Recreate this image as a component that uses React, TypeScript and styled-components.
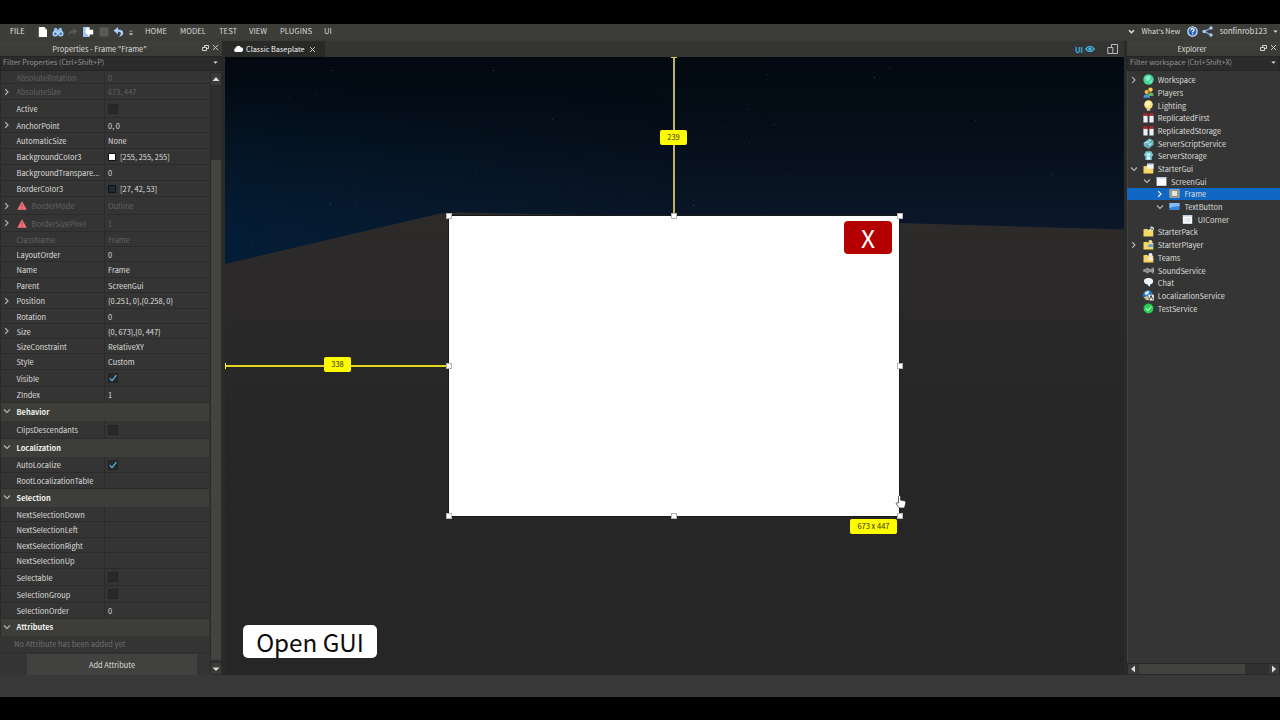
import React from 'react';
import styled, { createGlobalStyle } from 'styled-components';

const GlobalStyle = createGlobalStyle`
  * { box-sizing: border-box; }
  html, body { margin: 0; background: #000; overflow: hidden; }
  body { font-family: "Noto Sans CJK SC", "Open Sans", sans-serif; font-size: 7.45px; color: #dededa; }
`;

const Screen = styled.div`
  width: 1280px;
  height: 720px;
  padding: 24px 0 23px;
  background: #000;
  display: flex;
  flex-direction: column;
`;
const MenuBar = styled.header`
  height: 17px;
  flex: none;
  display: flex;
  align-items: center;
  background: linear-gradient(#3c3d38, #3d3e3a 80%, #393a37);
  line-height: 14px;
  padding-bottom: 3px;
  font-size: 7.7px;
`;
const FileMenu = styled.div`
  width: 38px;
  padding-left: 10px;
  color: #e2e2de;
  font-size: 7.4px;
`;
const QuickTools = styled.div`
  display: flex;
  align-items: center;
  width: 107px;
  height: 14px;
  padding-top: 1px;
  svg { flex: none; margin-right: 3.7px; }
`;
const MenuItem = styled.div<{ $w: number }>`
  width: ${p => p.$w}px;
  color: #d6d6d8;
  white-space: nowrap;
`;
const Account = styled.div`
  margin-left: auto;
  display: flex;
  align-items: center;
  padding-right: 2px;
  white-space: nowrap;
  svg { flex: none; }
`;
const NewsLabel = styled.span`
  font-size: 7.1px;
`;
const Gap = styled.span<{ $w: number }>`
  width: ${p => p.$w}px;
  flex: none;
`;
const Workbench = styled.main`
  height: 634px;
  flex: none;
  display: flex;
  background: #353535;
`;
const PropertiesPanel = styled.aside`
  width: 225px;
  flex: none;
  display: flex;
  flex-direction: column;
  background: #343434;
  border-right: 3px solid #2a2b29;
  box-shadow: inset -1px 0 #464741;
`;
const PanelTitle = styled.div`
  height: 15px;
  flex: none;
  display: flex;
  align-items: center;
  justify-content: center;
  background: linear-gradient(#3e3f3a, #3a3b36);
  line-height: 14px;
  padding-right: 23px;
  position: relative;
`;
const TitleButtons = styled.span<{ $right: number }>`
  position: absolute;
  right: ${p => p.$right}px;
  top: 3px;
  display: flex;
  gap: 3px;
`;
const Filter = styled.div`
  height: 15px;
  flex: none;
  display: flex;
  align-items: center;
  justify-content: space-between;
  padding: 0 3px 2px 2px;
  background: #2b2b2b;
  border: 1px solid #242424;
  color: #929292;
  font-size: 7.25px;
  line-height: 11px;
  white-space: nowrap;
`;
const PropertiesBody = styled.div`
  display: flex;
  height: 604px;
  flex: none;
  padding-top: 1px;
`;
const PropertyList = styled.div`
  width: 209px;
  height: 603px;
  flex: none;
`;
const PropertyRow = styled.div<{ $h: number }>`
  height: ${p => p.$h}px;
  display: flex;
  align-items: center;
  border-bottom: 1px solid #2b2b2b;
  border-left: 1px solid #2a2a2a;
  overflow: hidden;
`;
const SectionRow = styled.div<{ $h: number }>`
  height: ${p => p.$h}px;
  display: flex;
  align-items: center;
  padding-bottom: 2px;
  background: #3d3e39;
  border-left: 1px solid #2a2a2a;
  color: #f0f0ec;
  font-weight: 700;
`;
const Arrow = styled.span<{ $w: number; $pad?: number }>`
  width: ${p => p.$w}px;
  flex: none;
  display: flex;
  align-items: center;
  padding-left: ${p => p.$pad ?? 2.4}px;
`;
const PropertyName = styled.span<{ $dim?: boolean }>`
  width: 88.5px;
  flex: none;
  height: 100%;
  display: flex;
  align-items: center;
  gap: 5px;
  border-right: 1px solid #2b2b2b;
  color: ${p => (p.$dim ? '#61625e' : '#dededa')};
  white-space: nowrap;
`;
const PropertyValue = styled.span<{ $dim?: boolean }>`
  padding-left: 3px;
  display: flex;
  align-items: center;
  gap: 4px;
  color: ${p => (p.$dim ? '#61625e' : '#dededa')};
  white-space: nowrap;
`;
const CheckBox = styled.span`
  width: 10px;
  height: 10px;
  background: #292929;
  border: 1px solid #232323;
  display: flex;
  svg { display: block; }
`;
const Swatch = styled.span<{ $color: string }>`
  width: 8px;
  height: 8px;
  background: ${p => p.$color};
  border: 1px solid #111;
`;
const EmptyNote = styled.div`
  height: 17px;
  padding-left: 14px;
  line-height: 16px;
  color: #70706e;
  border-bottom: 1px solid #2d2d2d;
`;
const AddButton = styled.div`
  margin: 1px 12px 0 27px;
  height: 21px;
  background: #414140;
  line-height: 21px;
  text-align: center;
`;
const VerticalScroll = styled.div`
  width: 12px;
  margin-left: 1px;
  height: 603px;
  display: flex;
  flex-direction: column;
  background: #2e2e2e;
  border: 1px solid #292929;
`;
const ScrollButton = styled.span<{ $w: number; $h: number }>`
  width: ${p => p.$w}px;
  height: ${p => p.$h}px;
  flex: none;
  display: flex;
  align-items: center;
  justify-content: center;
  background: #3a3b38;
`;
const VerticalThumb = styled.div`
  margin: 75px 0 3px;
  flex: 1;
  background: #43443f;
`;
const Center = styled.section`
  width: 899px;
  flex: none;
  display: flex;
  flex-direction: column;
`;
const TabStrip = styled.div`
  height: 16px;
  flex: none;
  display: flex;
  align-items: center;
  justify-content: space-between;
  background: #343433;
`;
const DocumentTab = styled.div`
  width: 100px;
  height: 16px;
  display: flex;
  align-items: center;
  padding-left: 8px;
  background: #292a28;
  color: #f4f4f4;
  font-size: 7.3px;
  white-space: nowrap;
`;
const ViewTools = styled.div`
  display: flex;
  align-items: center;
  padding-right: 5px;
  color: #3fb4e2;
  font-weight: 700;
`;
const Viewport = styled.div`
  height: 618px;
  position: relative;
  overflow: hidden;
  background: #272727;
`;
const Scene = styled.svg`
  display: block;
`;
const GuiFrame = styled.div`
  position: absolute;
  left: 223px;
  top: 158px;
  width: 452px;
  height: 302px;
  background: #fefefe;
  border: 1px solid #17191c;
`;
const CloseGui = styled.div`
  position: absolute;
  right: 7px;
  top: 5px;
  width: 48px;
  height: 33px;
  border-radius: 4px;
  background: #b50000;
  color: #fff;
  font-size: 24.5px;
  line-height: 33px;
  text-align: center;
`;
const OpenGui = styled.div`
  position: absolute;
  left: 18px;
  top: 568px;
  width: 134px;
  height: 33px;
  border-radius: 5px;
  background: #fff;
  color: #0b0b0b;
  font-size: 24.2px;
  line-height: 33px;
  text-align: center;
  white-space: nowrap;
`;
const Measure = styled.div<{ $x: number; $y: number; $w: number; $h: number }>`
  position: absolute;
  left: ${p => p.$x}px;
  top: ${p => p.$y}px;
  width: ${p => p.$w}px;
  height: ${p => p.$h}px;
  background: #fffb00;
  border-radius: 2px;
  color: #353300;
  font-size: 7.5px;
  line-height: ${p => p.$h - 2}px;
  text-align: center;
`;
const Guide = styled.div<{ $x: number; $y: number; $w: number; $h: number; $c: string }>`
  position: absolute;
  left: ${p => p.$x}px;
  top: ${p => p.$y}px;
  width: ${p => p.$w}px;
  height: ${p => p.$h}px;
  background: ${p => p.$c};
`;
const Handle = styled.div<{ $x: number; $y: number }>`
  position: absolute;
  left: ${p => p.$x - 3}px;
  top: ${p => p.$y - 3}px;
  width: 6px;
  height: 6px;
  background: #fff;
  border: 1px solid #b5b5b5;
`;
const Pointer = styled.svg`
  position: absolute;
  left: 670px;
  top: 437px;
`;
const ExplorerPanel = styled.aside`
  width: 156px;
  flex: none;
  display: flex;
  flex-direction: column;
  background: #353535;
  border-left: 3px solid #2a2b29;
  box-shadow: inset 1px 0 #424340;
`;
const Tree = styled.div`
  flex: 1;
  padding-top: 2.4px;
`;
const TreeRow = styled.div<{ $level: number; $selected?: boolean }>`
  height: 12.7px;
  display: flex;
  align-items: center;
  padding-left: ${p => 2.5 + p.$level * 13.3}px;
  background: ${p => (p.$selected ? '#1068c4' : 'transparent')};
  color: #dededa;
  white-space: nowrap;
`;
const TreeIcon = styled.span`
  width: 11px;
  height: 11px;
  flex: none;
  margin: 0 4.3px 0 1px;
  svg { display: block; }
`;
const HorizontalScroll = styled.div`
  height: 12px;
  flex: none;
  display: flex;
  border: 1px solid #282828;
  background: #303030;
`;
const HorizontalThumb = styled.div`
  width: 106px;
  margin-left: 1px;
  background: #42433e;
`;
const StatusBar = styled.footer`
  height: 22px;
  flex: none;
  background: #383838;
`;

const Chevron = ({ open, color = '#b9bab5' }: { open?: boolean; color?: string }) => (
  <svg width="8" height="8" viewBox="0 0 8 8" fill="none" stroke={color} strokeWidth="1.1">
    <path d={open ? 'M1 2.5 4 5.5 7 2.5' : 'M2.2 1.2 5 4 2.2 6.8'} />
  </svg>
);
const Triangle = ({ d, size = 8 }: { d: string; size?: number }) => (
  <svg width={size} height={size} viewBox="0 0 8 8" fill="#dcdcd8"><path d={d} /></svg>
);
const DOWN = 'M.5 2.5h7L4 6Z';
const UP = 'M.5 6h7L4 2Z';

const CloseX = () => (
  <svg width="7" height="7" viewBox="0 0 7 7" stroke="#c8c8c4" strokeWidth="1"><path d="m1 1 5 5M6 1 1 6" /></svg>
);
const WindowButtons = ({ right }: { right: number }) => (
  <TitleButtons $right={right}>
    <svg width="7" height="8" viewBox="0 0 7 8" fill="none" stroke="#d2d2ce"><path d="M2.5 3V1.5h4v3H5M.5 3.5h4v3h-4z" /></svg>
    <CloseX />
  </TitleButtons>
);

type Prop = { n: string; v?: string; h: number; arrow?: boolean; dim?: boolean; warn?: boolean; check?: boolean; swatch?: string };
type Section = { title?: string; h?: number; rows: Prop[] };

const sections: Section[] = [
  { rows: [
    { n: 'AbsoluteRotation', v: '0', h: 12, dim: true },
    { n: 'AbsoluteSize', v: '673, 447', h: 16, dim: true, arrow: true },
    { n: 'Active', h: 18, check: false },
    { n: 'AnchorPoint', v: '0, 0', h: 15, arrow: true },
    { n: 'AutomaticSize', v: 'None', h: 16 },
    { n: 'BackgroundColor3', v: '[255, 255, 255]', h: 16, swatch: '#fff' },
    { n: 'BackgroundTranspare...', v: '0', h: 16 },
    { n: 'BorderColor3', v: '[27, 42, 53]', h: 16, swatch: '#1b2a35' },
    { n: 'BorderMode', v: 'Outline', h: 18, dim: true, arrow: true, warn: true },
    { n: 'BorderSizePixel', v: '1', h: 17, dim: true, arrow: true, warn: true },
    { n: 'ClassName', v: 'Frame', h: 15, dim: true },
    { n: 'LayoutOrder', v: '0', h: 15 },
    { n: 'Name', v: 'Frame', h: 16 },
    { n: 'Parent', v: 'ScreenGui', h: 15 },
    { n: 'Position', v: '{0.251, 0},{0.258, 0}', h: 16, arrow: true },
    { n: 'Rotation', v: '0', h: 15 },
    { n: 'Size', v: '{0, 673},{0, 447}', h: 15, arrow: true },
    { n: 'SizeConstraint', v: 'RelativeXY', h: 15 },
    { n: 'Style', v: 'Custom', h: 16 },
    { n: 'Visible', h: 17, check: true },
    { n: 'ZIndex', v: '1', h: 16 },
  ] },
  { title: 'Behavior', h: 18, rows: [{ n: 'ClipsDescendants', h: 18, check: false }] },
  { title: 'Localization', h: 18, rows: [
    { n: 'AutoLocalize', h: 16, check: true },
    { n: 'RootLocalizationTable', h: 16 },
  ] },
  { title: 'Selection', h: 18, rows: [
    { n: 'NextSelectionDown', h: 15 },
    { n: 'NextSelectionLeft', h: 16 },
    { n: 'NextSelectionRight', h: 15 },
    { n: 'NextSelectionUp', h: 16 },
    { n: 'Selectable', h: 17, check: false },
    { n: 'SelectionGroup', h: 17, check: false },
    { n: 'SelectionOrder', v: '0', h: 16 },
  ] },
  { title: 'Attributes', h: 17, rows: [] },
];

const Property = ({ p }: { p: Prop }) => (
  <PropertyRow $h={p.h}>
    <Arrow $w={15.5}>{p.arrow && <Chevron />}</Arrow>
    <PropertyName $dim={p.dim}>
      {p.warn && (
        <svg width="10" height="9" viewBox="0 0 10 9"><path d="M5 .3 9.8 8.7H.2Z" fill="#f2707a" /><path d="M5 3.2v2.6M5 6.7v1" stroke="#a8444d" /></svg>
      )}
      {p.n}
    </PropertyName>
    <PropertyValue $dim={p.dim}>
      {p.check !== undefined && (
        <CheckBox>
          {p.check && <svg width="8" height="8" viewBox="0 0 8 8" fill="none" stroke="#4fbdf0" strokeWidth="1.3"><path d="M.8 4.4 3 6.6 7.4 1.2" /></svg>}
        </CheckBox>
      )}
      {p.swatch && <Swatch $color={p.swatch} />}
      {p.v}
    </PropertyValue>
  </PropertyRow>
);

type Node = { n: string; icon: keyof typeof icons; level?: number; open?: boolean; selected?: boolean };

const Folder = () => <path d="M.5 3.2 4 2.8l1 .9h5.3v6.8H.5Z" fill="#f7d763" />;
const icons = {
  world: <><circle cx="5.5" cy="5.5" r="5.2" fill="#45d98c" /><path d="M2 3.5Q4.500.8 7.5 2.500L7 5.600 4 7.200ZM6 8l3-2 .3 1.500-2.200 1.900Z" fill="#86e7dd" /></>,
  players: <><circle cx="7.5" cy="2.6" r="2.2" fill="#ffd34f" /><path d="M5.2 9V6.8Q7.5 3.8 10.4 6.8V9Z" fill="#65b84f" /><circle cx="3.6" cy="5" r="2" fill="#ffbd55" /><path d="M.5 10.8Q.7 7.2 3.6 7.2T7 10.8Z" fill="#4796df" /></>,
  light: <><circle cx="5.5" cy="4.600" r="4.300" fill="#ffe27b" /><circle cx="4.800" cy="3.800" r="2.400" fill="#fff6ce" /><path d="M3.8 8.4h3.4v2.3H3.8Z" fill="#d9d2b0" /></>,
  replicated: <><path d="M.4 3.500h4.200v7H.4ZM6.400 3.500h4.200v7H6.400Z" fill="#e8f1fa" /><path d="M.4 1h4.200v2.800H.4ZM6.400 1h4.200v2.800H6.400Z" fill="#a8242c" /><path d="M4.600 3.800h1.800v1.200H4.600Z" fill="#b03840" /></>,
  server: <><path d="m6.5.3 4 2.500v4L7 9.600l-1 1.200L1 8.200.5 5Z" fill="#6fb9c5" /><path d="m1.500 5 3-1.200 2 1.200M5.500 7.200l3-1.500M6 2.500l2 1" stroke="#d3f5f6" fill="none" /><path d="m3.500 7 2 1.500M7 4.500l1.500-1" stroke="#2f7f90" fill="none" /></>,
  storage: <><path d="M.6 5.2 3 1.3h5.2l2.3 3.9-1.7 1V10H2.3V6.2Z" fill="#76c8d0" /><path d="M3.7 3.6h3.6v1.8H3.7ZM4 6.5h3v3H4Z" fill="#dffafb" /></>,
  startergui: <><Folder /><path d="M4 .7h6.6v5H4Z" fill="#f6f8fb" /><path d="M4 .7h6.6v1.200H4Z" fill="#b9cde8" /></>,
  screen: <><path d="M.6 1.2h9.8v8.6H.6Z" fill="#f9fbfd" /><path d="M.6 1.2h9.8v1.3H.6Z" fill="#b4cbe8" /></>,
  frame: <><path d="M.5 1.2h10v8.6H.5Z" fill="#7c8388" /><path d="M2.7 3h5.600v5H2.700Z" fill="#e3e6d6" /><path d="M1 1.700h9v7.600H1Z" stroke="#a9afa8" fill="none" /></>,
  button: <><path d="M.4 2h10.2v7H.4Z" fill="#3783df" /><path d="M.4 2h10.2v3L4 6 .4 7Z" fill="#83b9f5" /></>,
  corner: <><path d="M.8 1.2h9.4v8.6H.8Z" fill="#f9fafc" /><path d="M2.2 5h1M4.2 5h4M2.2 7.2h1M4.2 7.2h4" stroke="#b7c1d0" strokeWidth=".8" /><path d="M.8 1.2h9.4v1.3H.8Z" fill="#b8cbe6" /></>,
  pack: <><Folder /><path d="m5.500 5.500 3-3M7.500 1.500q3-1 2.800 2.300" stroke="#e0e4e8" strokeWidth="1.400" fill="none" /></>,
  player: <><Folder /><circle cx="7.4" cy="3" r="2" fill="#f8dc9b" /><path d="M4.7 8q.5-3 3-3t3 3Z" fill="#629edd" /></>,
  teams: <><Folder /><circle cx="7.5" cy="3" r="2" fill="#ececec" /><path d="M5 8q.3-3 2.700-3t2.800 3Z" fill="#eee" /></>,
  sound: <><path d="M.3 4h2l2.2-2v7L2.3 7h-2ZM6 4h2l2.2-2v7L8 7H6Z" fill="#8f9092" /><path d="M5.2 3v5M10.6 3.5v4" stroke="#c1c2c3" /></>,
  chat: <path d="M1 3.5Q1.3 1 5.5 1t4.7 3.2Q10 7 7.200 7.400L6.500 10 4.500 7.400Q.8 7 1 3.5Z" fill="#edf5fa" />,
  locale: <><circle cx="5" cy="5.2" r="5" fill="#2479c8" /><path d="M1.5 3Q4 .3 6.5 1.4L5 4.2 2.7 5Z" fill="#dceef7" /><path d="M5 4.700h5.800v5.800H6.600Z" fill="#f7ede0" /><path d="m6.500 9.500 1.600-4 1.600 4" stroke="#2a3948" fill="none" /><path d="M1 7.2 4.4 6l1.500 3.600-2 .8Z" fill="#edbf70" /></>,
  test: <><circle cx="5.5" cy="5.5" r="4.900" fill="#2acd55" /><path d="m3 5.500 2 2 3.300-3.800" stroke="#a9f5b8" strokeWidth="1.200" fill="none" /></>,
};

const nodes: Node[] = [
  { n: 'Workspace', icon: 'world', open: false },
  { n: 'Players', icon: 'players' },
  { n: 'Lighting', icon: 'light' },
  { n: 'ReplicatedFirst', icon: 'replicated' },
  { n: 'ReplicatedStorage', icon: 'replicated' },
  { n: 'ServerScriptService', icon: 'server' },
  { n: 'ServerStorage', icon: 'storage' },
  { n: 'StarterGui', icon: 'startergui', open: true },
  { n: 'ScreenGui', icon: 'screen', level: 1, open: true },
  { n: 'Frame', icon: 'frame', level: 2, open: false, selected: true },
  { n: 'TextButton', icon: 'button', level: 2, open: true },
  { n: 'UICorner', icon: 'corner', level: 3 },
  { n: 'StarterPack', icon: 'pack' },
  { n: 'StarterPlayer', icon: 'player', open: false },
  { n: 'Teams', icon: 'teams' },
  { n: 'SoundService', icon: 'sound' },
  { n: 'Chat', icon: 'chat' },
  { n: 'LocalizationService', icon: 'locale' },
  { n: 'TestService', icon: 'test' },
];

const stars = [[107, 13], [64, 40], [91, 36], [268, 13], [542, 17], [664, 11], [649, 20], [522, 52], [500, 70], [549, 67], [524, 86], [564, 118], [468, 148], [27, 185], [130, 147], [105, 146], [625, 129], [750, 63], [827, 117], [327, 62], [251, 114]];
const handles = [[224, 159], [449, 159], [674.5, 159], [224, 309], [674.5, 309], [224, 459], [449, 459], [674.5, 459]];
const menus: [string, number][] = [['HOME', 35], ['MODEL', 39], ['TEST', 30], ['VIEW', 31], ['PLUGINS', 44], ['UI', 20]];

export default function App() {
  return (
    <>
      <GlobalStyle />
      <Screen>
        <MenuBar>
          <FileMenu>FILE</FileMenu>
          <QuickTools>
            <svg width="10" height="12" viewBox="0 0 10 12"><path d="M.8 1h5.5L9 3.8V11H.8Z" fill="#fff" /><path d="M6.3 1v3H9" fill="#c7cbd2" /></svg>
            <svg width="12" height="12" viewBox="0 0 12 12"><path d="M2.500 2h2.200l.6 1.500h1.400L7.300 2h2.200l1.300 5H1.200Z" fill="#8fc0f0" /><circle cx="3.200" cy="7.700" r="2.100" fill="#477fb8" stroke="#b9dcff" strokeWidth="1.200" /><circle cx="8.800" cy="7.700" r="2.100" fill="#477fb8" stroke="#b9dcff" strokeWidth="1.200" /></svg>
            <svg width="11" height="12" viewBox="0 0 11 12"><path d="M1.300 10Q1 4.500 6.200 4.500V1.700L10.300 5.600 6.200 9V6.500Q3 6.500 1.300 10Z" fill="#5a5b59" /></svg>
            <svg width="12" height="12" viewBox="0 0 12 12"><path d="M1 1h6.500v10H1Z" fill="#9bc5f4" /><path d="M4.500 1.500h3v2.300h3.700v4.600H7.500v2.400L3 6Z" fill="#fff" /></svg>
            <svg width="12" height="12" viewBox="0 0 12 12"><path d="M1.500 1.500h9v9h-9Z" fill="#5a5b59" /></svg>
            <svg width="11" height="12" viewBox="0 0 11 12"><path d="M5 1 .5 4.700 5 8.200V5.700Q8 5.500 7.700 8.100 7.500 9.500 5.800 11 10.200 10 10.200 6.800 10 3.500 5 3.500Z" fill="#a9d0f8" /></svg>
            <svg width="6" height="8" viewBox="0 0 6 8"><path d="M1.500 3.200h3M1.500 5.700h3L3 7Z" stroke="#ccc" strokeWidth=".7" fill="#ccc" /></svg>
          </QuickTools>
          {menus.map(([label, w]) => <MenuItem key={label} $w={w}>{label}</MenuItem>)}
          <Account>
            <svg width="7" height="7" viewBox="0 0 7 7" fill="none" stroke="#e4e4e4" strokeWidth="1.4"><path d="m1 2.3 2.5 2.5L6 2.3" /></svg>
            <Gap $w={7} />
            <NewsLabel>What's New</NewsLabel>
            <Gap $w={6.5} />
            <svg width="11" height="11" viewBox="0 0 11 11" fill="none"><circle cx="5.5" cy="5.5" r="4.7" fill="#2b66b9" stroke="#dcecff" strokeWidth="1.1" /><path d="M3.900 4.300q.2-1.700 1.800-1.600 1.500.2 1.400 1.400-.1.800-1.500 1.600v.8M5.600 7.400v1.100" stroke="#fff" strokeWidth="1.200" /></svg>
            <Gap $w={4} />
            <svg width="11" height="11" viewBox="0 0 11 11"><path d="M9 2 2.300 5.500 9 9" stroke="#86b6ee" fill="none" strokeWidth="1.200" /><g fill="#a6cbf7"><circle cx="9" cy="2" r="1.7" /><circle cx="2.2" cy="5.5" r="1.8" /><circle cx="9" cy="9" r="1.7" /></g></svg>
            <Gap $w={7} />
            sonfinrob123
            <Gap $w={6} />
            <Triangle d={DOWN} size={5} />
          </Account>
        </MenuBar>
        <Workbench>
          <PropertiesPanel>
            <PanelTitle>Properties - Frame "Frame"<WindowButtons right={3} /></PanelTitle>
            <Filter>Filter Properties (Ctrl+Shift+P)<Triangle d={DOWN} size={5} /></Filter>
            <PropertiesBody>
              <PropertyList>
                {sections.map((s, i) => (
                  <React.Fragment key={i}>
                    {s.title && <SectionRow $h={s.h ?? 18}><Arrow $w={15.5}><Chevron open /></Arrow>{s.title}</SectionRow>}
                    {s.rows.map(p => <Property key={p.n} p={p} />)}
                  </React.Fragment>
                ))}
                <EmptyNote>No Attribute has been added yet</EmptyNote>
                <AddButton>Add Attribute</AddButton>
              </PropertyList>
              <VerticalScroll>
                <ScrollButton $w={10} $h={12}><Triangle d={UP} /></ScrollButton>
                <VerticalThumb />
                <ScrollButton $w={10} $h={11}><Triangle d={DOWN} /></ScrollButton>
              </VerticalScroll>
            </PropertiesBody>
          </PropertiesPanel>

          <Center>
            <TabStrip>
              <DocumentTab>
                <svg width="11" height="8" viewBox="0 0 11 8"><path d="M2.300 7A2.100 2.100 0 0 1 2.300 3.200 3 3 0 0 1 7.800 2.300 2.400 2.400 0 0 1 8.500 7Z" fill="#fff" /></svg>
                <Gap $w={2} />Classic Baseplate<Gap $w={4} /><CloseX />
              </DocumentTab>
              <ViewTools>
                UI<Gap $w={2} />
                <svg width="10" height="8" viewBox="0 0 10 8" fill="none" stroke="#3fb4e2" strokeWidth="1.2"><path d="M.6 4Q5-1.200 9.400 4 5 9 .6 4Z" /><circle cx="5" cy="4" r="1.2" fill="#3fb4e2" /></svg>
                <Gap $w={12} />
                <svg width="12" height="12" viewBox="0 0 12 12" fill="none" stroke="#bbb"><path d="M4.500 4V1.500h6v9H6M.8 4.500h5v6h-5z" /></svg>
              </ViewTools>
            </TabStrip>
            <Viewport>
              <Scene width="899" height="618" viewBox="0 0 899 618">
                <defs>
                  <linearGradient id="sky" x1="0" y1="0" x2="0" y2="1"><stop offset="0" stopColor="#020911" /><stop offset=".4" stopColor="#060f1a" /><stop offset=".8" stopColor="#0b1728" /><stop offset="1" stopColor="#0b1a2e" /></linearGradient>
                  <linearGradient id="glow" x1="0" y1="0" x2="1" y2="0"><stop offset="0" stopColor="#00203c" stopOpacity=".6" /><stop offset=".5" stopColor="#00203c" stopOpacity="0" /></linearGradient>
                  <linearGradient id="fade" x1="0" y1="0" x2="0" y2="1"><stop offset=".1" stopColor="#000" /><stop offset=".8" stopColor="#fff" /></linearGradient>
                  <mask id="low"><rect width="899" height="210" fill="url(#fade)" /></mask>
                  <linearGradient id="ground" x1="0" y1="0" x2="0" y2="1"><stop offset="0" stopColor="#2d2b2a" /><stop offset=".4" stopColor="#282727" /><stop offset="1" stopColor="#272626" /></linearGradient>
                </defs>
                <rect width="899" height="210" fill="url(#sky)" />
                <rect width="899" height="210" fill="url(#glow)" mask="url(#low)" />
                {stars.map(([x, y], i) => <rect key={i} x={x} y={y} width="1" height="1" fill="#53606c" opacity={i % 3 ? 0.4 : 0.7} />)}
                <path d="M0 207 215 156.500 235 155.500 390 158.500 674 166 899 172.500V618H0Z" fill="url(#ground)" />
              </Scene>
              <Guide $x={448} $y={1} $w={2} $h={158} $c="#bdb45c" />
              <Guide $x={446} $y={0} $w={6} $h={1} $c="#d6cc4c" />
              <Guide $x={0} $y={308} $w={224} $h={2} $c="#e3d51c" />
              <Guide $x={0} $y={306} $w={1} $h={6} $c="#fff41a" />
              <GuiFrame><CloseGui>X</CloseGui></GuiFrame>
              <Measure $x={435} $y={73} $w={27} $h={15}>239</Measure>
              <Measure $x={99} $y={300} $w={27} $h={15}>338</Measure>
              <Measure $x={625} $y={462} $w={47} $h={15}>673 x 447</Measure>
              {handles.map(([x, y], i) => <Handle key={i} $x={x} $y={y} />)}
              <OpenGui>Open GUI</OpenGui>
              <Pointer width="12" height="16" viewBox="0 0 12 16"><path d="M3.500 2.200Q4.500.7 5.500 2.200V6L9.800 6.900Q11 7.300 10.700 9.200L9.500 14H4.300L1.200 9.800Q1 8.200 3.500 9Z" fill="#fff" stroke="#222" strokeWidth=".7" /></Pointer>
            </Viewport>
          </Center>

          <ExplorerPanel>
            <PanelTitle>Explorer<WindowButtons right={3} /></PanelTitle>
            <Filter>Filter workspace (Ctrl+Shift+X)<Triangle d={DOWN} size={5} /></Filter>
            <Tree>
              {nodes.map(n => (
                <TreeRow key={n.n} $level={n.level ?? 0} $selected={n.selected}>
                  <Arrow $w={12} $pad={0}>{n.open !== undefined && <Chevron open={n.open} color={n.selected ? '#fff' : undefined} />}</Arrow>
                  <TreeIcon><svg width="11" height="11" viewBox="0 0 11 11">{icons[n.icon]}</svg></TreeIcon>
                  {n.n}
                </TreeRow>
              ))}
            </Tree>
            <HorizontalScroll>
              <ScrollButton $w={10} $h={10}><Triangle d="M6 .5v7L2 4Z" /></ScrollButton>
              <HorizontalThumb />
              <Gap $w={24} />
              <ScrollButton $w={10} $h={10}><Triangle d="M2 .5v7L6 4Z" /></ScrollButton>
            </HorizontalScroll>
          </ExplorerPanel>
        </Workbench>
        <StatusBar />
      </Screen>
    </>
  );
}
